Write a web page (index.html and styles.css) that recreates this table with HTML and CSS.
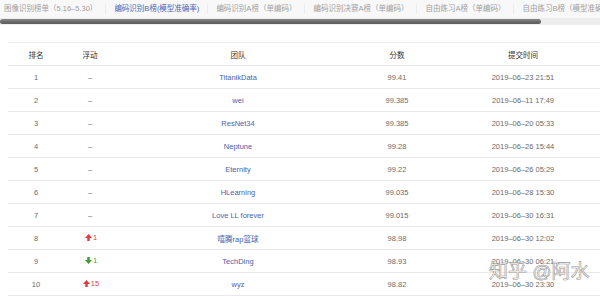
FILE: index.html
```html
<!doctype html>
<html lang="zh-CN">
  <head>
    <meta charset="UTF-8" />
    <title>排行榜</title>
    <link rel="stylesheet" href="styles.css">
  </head>
  <body>
    <div class="tabs">
      <span class="tab first">图像识别榜单（5.16–5.30）</span>
      <span class="tab active">编码识别B榜(模型准确率)</span>
      <span class="tab">编码识别A榜（单编码）</span>
      <span class="tab">编码识别决赛A榜（单编码）</span>
      <span class="tab">自由练习A榜（单编码）</span>
      <span class="tab">自由练习B榜（模型准确率）</span>
    </div>
    <div class="scrollbar"><div class="thumb"></div></div>

    <div class="board">
      <table class="rank-table">
        <thead>
          <tr>
            <th class="col-rank">排名</th>
            <th class="col-move">浮动</th>
            <th class="col-team">团队</th>
            <th class="col-score">分数</th>
            <th class="col-time">提交时间</th>
          </tr>
        </thead>
        <tbody>
          <tr><td>1</td><td>–</td><td class="team">TitanikData</td><td>99.41</td><td>2019–06–23 21:51</td></tr>
          <tr><td>2</td><td>–</td><td class="team">wei</td><td>99.385</td><td>2019–06–11 17:49</td></tr>
          <tr><td>3</td><td>–</td><td class="team">ResNet34</td><td>99.385</td><td>2019–06–20 05:33</td></tr>
          <tr><td>4</td><td>–</td><td class="team">Neptune</td><td>99.28</td><td>2019–06–26 15:44</td></tr>
          <tr><td>5</td><td>–</td><td class="team">Eternity</td><td>99.22</td><td>2019–06–26 05:29</td></tr>
          <tr><td>6</td><td>–</td><td class="team">HLearning</td><td>99.035</td><td>2019–06–28 15:30</td></tr>
          <tr><td>7</td><td>–</td><td class="team">Love LL forever</td><td>99.015</td><td>2019–06–30 16:31</td></tr>
          <tr>
            <td>8</td>
            <td><span class="move up"><svg viewBox="0 0 8 8" width="7" height="7"><path d="M4 0 L8 4.5 L5.4 4.5 L5.4 8 L2.6 8 L2.6 4.5 L0 4.5 Z"/></svg>1</span></td>
            <td class="team">嘻腾rap篮球</td><td>98.98</td><td>2019–06–30 12:02</td>
          </tr>
          <tr>
            <td>9</td>
            <td><span class="move down"><svg viewBox="0 0 8 8" width="7" height="7"><path d="M4 8 L8 3.5 L5.4 3.5 L5.4 0 L2.6 0 L2.6 3.5 L0 3.5 Z"/></svg>1</span></td>
            <td class="team">TechDing</td><td>98.93</td><td>2019–06–30 06:21</td>
          </tr>
          <tr>
            <td>10</td>
            <td><span class="move up"><svg viewBox="0 0 8 8" width="7" height="7"><path d="M4 0 L8 4.5 L5.4 4.5 L5.4 8 L2.6 8 L2.6 4.5 L0 4.5 Z"/></svg>15</span></td>
            <td class="team">wyz</td><td>98.82</td><td>2019–06–30 23:30</td>
          </tr>
        </tbody>
      </table>
      <div class="watermark">知乎 @阿水</div>
    </div>
  </body>
</html>
```
FILE: styles.css
```css
* {
  margin: 0;
  padding: 0;
  box-sizing: border-box;
}

body {
  font-family: 'Liberation Sans', 'Noto Sans CJK SC', sans-serif;
  font-size: 7.5px;
  color: #6a6a6a;
  background: #fff;
  width: 600px;
  height: 296px;
  overflow: hidden;
}

.tabs {
  display: flex;
  height: 18px;
  align-items: center;
  background: #f8f8f8;
  white-space: nowrap;
  overflow: hidden;
}

.tab {
  padding: 0 8px;
  color: #a0a0a0;
  border-right: 1px solid #ececec;
  line-height: 10px;
}

.tab.first {
  padding-left: 4px;
}

.tab.active {
  color: #4a66b4;
}

.scrollbar {
  height: 7px;
  background: #ededed;
  padding-top: 1px;
}

.thumb {
  width: 541px;
  height: 5px;
  border-radius: 3px;
  background: linear-gradient(#8a8a8a, #666 60%, #5e5e5e);
}

.board {
  position: relative;
  margin-top: 17px;
  padding-left: 8px;
  overflow: hidden;
}

.rank-table {
  border-collapse: collapse;
  table-layout: fixed;
  width: 604px;
  border-top: 1px solid #ececec;
}

.rank-table th,
.rank-table td {
  height: 23px;
  text-align: center;
  border-bottom: 1px solid #e8e8e8;
  font-weight: normal;
  white-space: nowrap;
}

.rank-table th {
  color: #333;
}

.col-rank { width: 56px; }
.col-move { width: 52px; }
.col-team { width: 244px; }
.col-score { width: 74px; }
.col-time { width: 178px; }

.team {
  color: #4d62a8;
}

.move {
  display: inline-flex;
  align-items: center;
  gap: 1px;
  margin-left: 2px;
}

.move svg {
  fill: currentColor;
}

.move.up {
  color: #e0393e;
}

.move.down {
  color: #3f9a3a;
}

.watermark {
  position: absolute;
  left: 489px;
  top: 219px;
  font-size: 19px;
  line-height: 1.2;
  white-space: nowrap;
  color: rgba(255, 255, 255, 0.85);
  -webkit-text-stroke: 0.6px #9a9a9a;
  pointer-events: none;
}
```
